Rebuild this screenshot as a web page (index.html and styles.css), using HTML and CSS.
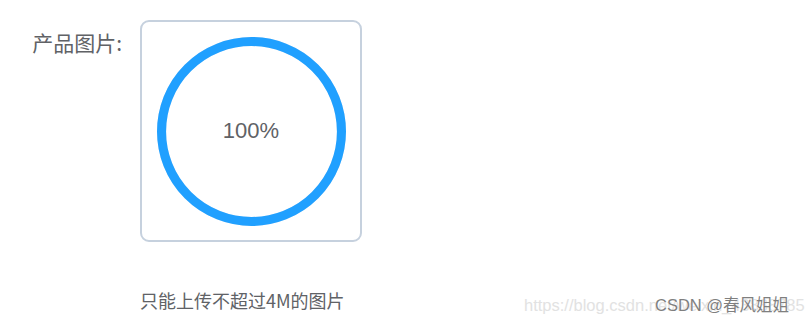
FILE: index.html
```html
<!DOCTYPE html>
<html lang="zh">
<head>
<meta charset="utf-8">
<title>产品图片</title>
<link rel="stylesheet" href="styles.css">
</head>
<body>
<div class="page">
  <div class="form-item">
    <label class="form-label">产品图片:</label>
    <div class="form-content">
      <div class="upload-card">
        <div class="progress">
          <svg class="progress-svg" viewBox="0 0 100 100">
            <circle cx="50" cy="50" r="47.6" fill="none" stroke="#e5e9f2" stroke-width="4.8"/>
            <circle cx="50" cy="50" r="47.6" fill="none" stroke="#20a0ff" stroke-width="4.8" stroke-linecap="round"/>
          </svg>
          <span class="progress-text">100%</span>
        </div>
      </div>
      <div class="upload-tip">只能上传不超过4M的图片</div>
    </div>
  </div>
  <div class="watermark">
    <span class="wm-url">https://blog.csdn.net/weixin_43838785</span>
    <span class="wm-name">CSDN @春风姐姐</span>
  </div>
</div>
</body>
</html>
```
FILE: styles.css
```css
html, body {
  margin: 0;
  padding: 0;
  background: #ffffff;
}
.page {
  position: relative;
  width: 806px;
  height: 324px;
  overflow: hidden;
  font-family: "Liberation Sans", "Noto Sans CJK SC", sans-serif;
  color: #606266;
}
.form-item {
  display: flex;
  padding-top: 20px;
}
.form-label {
  width: 122px;
  box-sizing: border-box;
  text-align: right;
  font-family: "Noto Sans CJK SC", sans-serif;
  font-size: 21px;
  line-height: 44px;
  color: #606266;
}
.form-content {
  margin-left: 18px;
  display: flex;
  flex-direction: column;
}
.upload-card {
  width: 222px;
  height: 222px;
  box-sizing: border-box;
  border: 2px solid #c6d1de;
  border-radius: 9px;
  display: flex;
  align-items: center;
  justify-content: center;
}
.progress {
  position: relative;
  width: 189px;
  height: 189px;
}
.progress-svg {
  display: block;
  width: 189px;
  height: 189px;
}
.progress-text {
  position: absolute;
  left: 0;
  right: 0;
  top: 50%;
  transform: translateY(-50%);
  text-align: center;
  font-size: 22px;
  line-height: 1;
  color: #606266;
}
.upload-tip {
  margin-top: 46px;
  font-family: "Noto Sans CJK SC", sans-serif;
  font-size: 18px;
  line-height: 24px;
  color: #606266;
}
.watermark {
  position: absolute;
  left: 524px;
  top: 294px;
  white-space: nowrap;
  font-family: "Liberation Sans", "Noto Sans CJK SC", sans-serif;
  font-size: 16.5px;
  line-height: 22px;
}
.wm-url {
  color: #e2e2e2;
}
.wm-name {
  position: absolute;
  left: 131px;
  top: 0;
  color: #7f7f7f;
  text-shadow: 0 0 1px #fff;
}
```
